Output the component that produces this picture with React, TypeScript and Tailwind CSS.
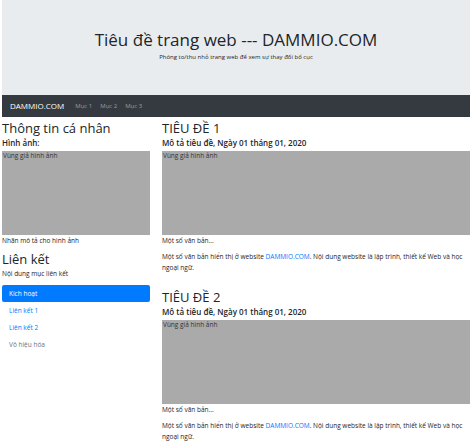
import React from "react";

const FONT = { fontFamily: '"Open Sans", "Noto Sans", sans-serif' };

function Placeholder({ className }: { className: string }) {
    return (
        <div className={`bg-[#aaaaaa] text-[6.5px] leading-[10px] text-[#333] px-[1px] ${className}`}>
            Vùng giả hình ảnh
        </div>
    );
}

function Article({ title, first }: { title: string; first?: boolean }) {
    return (
        <div className={first ? "mt-[2px]" : "mt-[15px]"}>
            <h2 className="text-[13px] leading-[18px] text-[#212529]">{title}</h2>
            <h5 className="text-[8px] leading-[11px] font-semibold text-[#212529]">Mô tả tiêu đề, Ngày 01 tháng 01, 2020</h5>
            <Placeholder className="mt-[3px] h-[84px]" />
            <p className="text-[6.5px] leading-[11px] text-[#212529]">Một số văn bản...</p>
            <p className="mt-[5px] text-[6.5px] leading-[11px] text-[#212529]">
                Một số văn bản hiển thị ở website <a className="text-[#007bff]">DAMMIO.COM</a>. Nội dung website là lập trình, thiết kế Web và học ngoại ngữ.
            </p>
        </div>
    );
}

export default function App() {
    return (
        <div className="w-[474px] h-[444px] bg-white overflow-hidden" style={FONT}>
            <div className="ml-[2px] w-[468px]">
                {/* Jumbotron */}
                <div className="h-[95px] bg-[#e9ecef] pt-[28px] text-center">
                    <h1 className="text-[17px] leading-[24px] text-[#212529]">Tiêu đề trang web --- DAMMIO.COM</h1>
                    <p className="text-[6px] leading-[10px] text-[#212529]">Phóng to/thu nhỏ trang web để xem sự thay đổi bố cục</p>
                </div>

                {/* Navbar */}
                <div className="h-[22px] bg-[#343a40] flex items-center pl-[8px]">
                    <span className="text-[8px] text-white mr-[11px]">DAMMIO.COM</span>
                    <div className="flex gap-[8px] text-[6px] text-[#9a9da0]">
                        <span>Mục 1</span>
                        <span>Mục 2</span>
                        <span>Mục 3</span>
                    </div>
                </div>

                <div className="flex gap-[12px]">
                    {/* Left column */}
                    <div className="w-[148px] shrink-0">
                        <h2 className="mt-[2px] text-[13px] leading-[18px] text-[#212529]">Thông tin cá nhân</h2>
                        <h5 className="text-[8px] leading-[11px] font-semibold text-[#212529]">Hình ảnh:</h5>
                        <Placeholder className="mt-[3px] h-[84px]" />
                        <p className="text-[6.5px] leading-[11px] text-[#212529]">Nhãn mô tả cho hình ảnh</p>
                        <h2 className="mt-[4px] text-[13px] leading-[18px] text-[#212529]">Liên kết</h2>
                        <p className="text-[6.5px] leading-[11px] text-[#212529]">Nội dung mục liên kết</p>
                        <ul className="mt-[6px] flex flex-col text-[6.5px]">
                            <li className="h-[17px] flex items-center px-[7px] rounded-[2px] bg-[#007bff] text-white">Kích hoạt</li>
                            <li className="h-[17px] flex items-center px-[7px] text-[#007bff]">Liên kết 1</li>
                            <li className="h-[17px] flex items-center px-[7px] text-[#007bff]">Liên kết 2</li>
                            <li className="h-[17px] flex items-center px-[7px] text-[#6c757d]">Vô hiệu hóa</li>
                        </ul>
                    </div>

                    {/* Right column */}
                    <div className="flex-1 min-w-0">
                        <Article title="TIÊU ĐỀ 1" first />
                        <Article title="TIÊU ĐỀ 2" />
                    </div>
                </div>
            </div>
        </div>
    );
}
